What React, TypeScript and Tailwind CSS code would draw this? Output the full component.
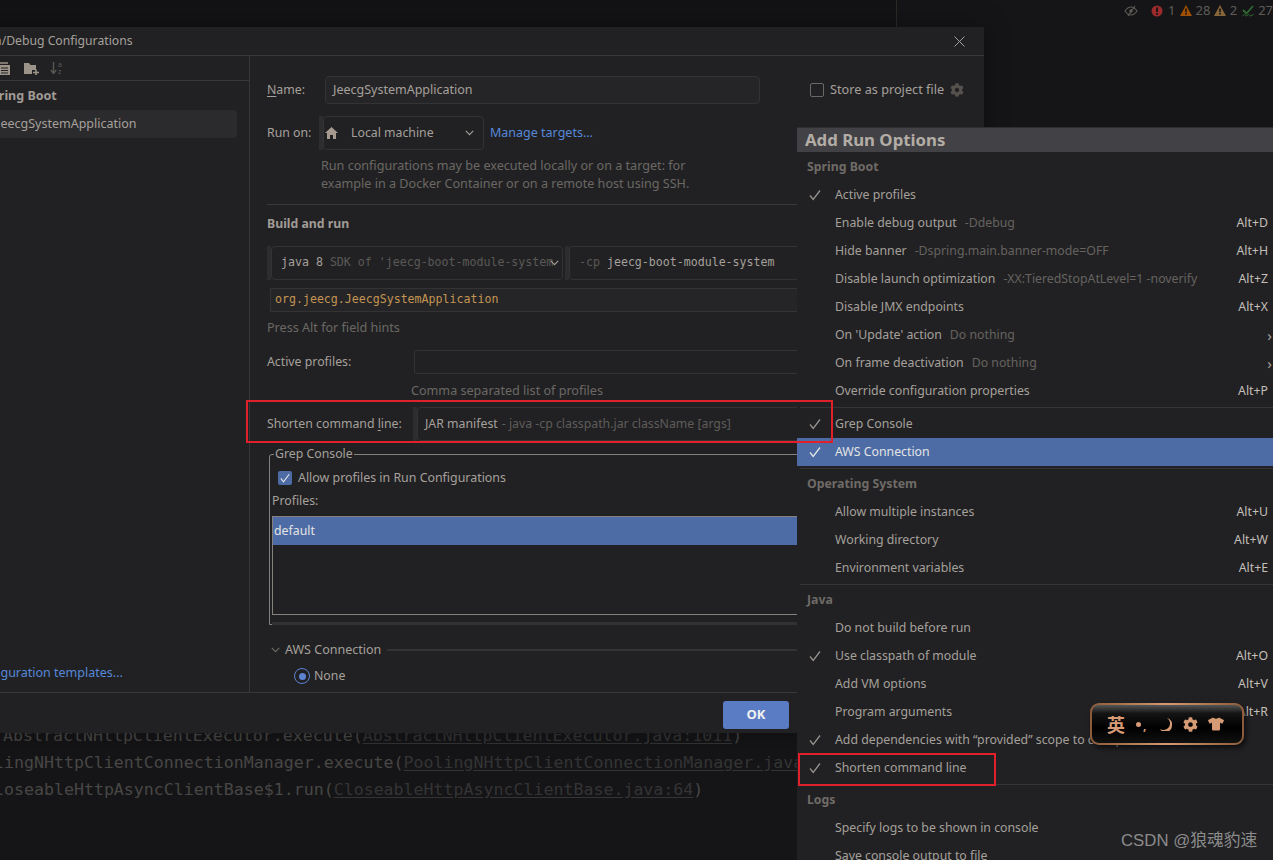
import { FaCog, FaTshirt } from 'react-icons/fa'

const sans = "font-['Noto_Sans','Noto_Sans_CJK_SC',sans-serif]"

type Opt = { label: string; hint?: string; on?: boolean; sel?: boolean; arrow?: boolean; shortcut?: string }

function Check({ className }: { className: string }) {
  return (
    <svg width="12" height="12" viewBox="0 0 12 12" fill="none" className={className}>
      <path d="M1 6.5 4.2 10.5 11 1.5" stroke="currentColor" strokeWidth="1.3" />
    </svg>
  )
}

function OptionRow({ label, hint, on, sel, arrow, shortcut }: Opt) {
  return (
    <div className={`flex h-[28px] shrink-0 items-center pr-[5px] ${sel ? 'bg-[#4d6ca6] text-[#e4e4e4]' : 'text-[#a5a09a]'}`}>
      <div className="flex w-[38px] shrink-0 justify-end pr-[14px]">
        {on && <Check className={sel ? 'text-[#e4e4e4]' : 'text-[#96928c]'} />}
      </div>
      <span className="whitespace-nowrap">{label}</span>
      {hint && <span className="ml-[8px] whitespace-nowrap text-[#66635f]">{hint}</span>}
      <span className="ml-auto whitespace-nowrap text-[#c4bfb8]">{shortcut}</span>
      {arrow && <span className="mr-[-4px] text-[15px] leading-none text-[#a5a09a]">›</span>}
    </div>
  )
}

function GroupHead({ children }: { children: string }) {
  return <div className="flex h-[28px] shrink-0 items-center pl-[10px] font-bold text-[#6f6b66]">{children}</div>
}

function PopSep({ h }: { h: string }) {
  return (
    <div className={`flex shrink-0 items-center pl-[3px] ${h}`}>
      <div className="h-px w-full bg-[#353538]" />
    </div>
  )
}

function StatusIcons() {
  return (
    <div className="flex items-center pl-[227px] pt-[1px] text-[13px] text-[#5f5c58]">
      <svg width="14" height="12" viewBox="0 0 14 12" fill="none" className="shrink-0">
        <path d="M1 6c2-3 4-4 6-4s4 1 6 4c-2 3-4 4-6 4S3 9 1 6Z" stroke="#5e5b57" strokeWidth="1.2" />
        <path d="M4 11 11 1" stroke="#5e5b57" strokeWidth="1.2" />
        <circle cx="7" cy="6" r="1.7" fill="#5e5b57" />
      </svg>
      <svg width="12" height="12" viewBox="0 0 12 12" className="ml-[13px] shrink-0">
        <circle cx="6" cy="6" r="5.5" fill="#9a2a2c" />
        <rect x="5.1" y="2.5" width="1.8" height="4.5" fill="#141416" />
        <rect x="5.1" y="8" width="1.8" height="1.8" fill="#141416" />
      </svg>
      <span className="ml-[5px] w-[14px]">1</span>
      <svg width="12" height="11" viewBox="0 0 12 11" className="shrink-0">
        <path d="M6 0 12 11H0Z" fill="#a04f00" />
        <rect x="5.2" y="3.5" width="1.6" height="3.8" fill="#141416" />
        <rect x="5.2" y="8" width="1.6" height="1.6" fill="#141416" />
      </svg>
      <span className="ml-[4px] w-[22px]">28</span>
      <svg width="12" height="11" viewBox="0 0 12 11" className="shrink-0">
        <path d="M6 0 12 11H0Z" fill="#87653a" />
        <rect x="5.2" y="3.5" width="1.6" height="3.8" fill="#141416" />
        <rect x="5.2" y="8" width="1.6" height="1.6" fill="#141416" />
      </svg>
      <span className="ml-[4px] w-[15px]">2</span>
      <svg width="12" height="12" viewBox="0 0 12 12" fill="none" className="shrink-0">
        <path d="M1 5 4.5 8.5 11 1" stroke="#2f6a31" strokeWidth="1.8" />
        <path d="M0.5 11 2.5 9.5 4.5 11 6.5 9.5 8.5 11 11.5 9.5" stroke="#2f6a31" strokeWidth="1" />
      </svg>
      <span className="ml-[4px]">27</span>
    </div>
  )
}

function Combo({ className, children }: { className: string; children: React.ReactNode }) {
  return (
    <div className={`flex shrink-0 border-l-[4px] border-[#2d2d30] ${className}`}>
      <div className="flex h-full w-full items-center rounded-[4px] border border-[#333336]">{children}</div>
    </div>
  )
}

function Chevron({ className }: { className: string }) {
  return (
    <svg width="9" height="6" viewBox="0 0 9 6" fill="none" className={className}>
      <path d="M.8.8 4.5 4.6 8.2.8" stroke="currentColor" strokeWidth="1.1" />
    </svg>
  )
}

function RightForm() {
  return (
    <div className="flex min-w-0 flex-1 flex-col pl-[17px] text-[12.3px] text-[#a5a09a]">
      {/* Name */}
      <div className="mt-[20px] flex h-[28px] items-center">
        <span className="w-[58px]"><span className="underline underline-offset-2">N</span>ame:</span>
        <div className="flex h-[28px] w-[435px] items-center rounded-[4px] border border-[#333336] bg-[#252528] pl-[7px] text-[12.5px]">JeecgSystemApplication</div>
        <div className="ml-[50px] h-[14px] w-[14px] rounded-[2px] border border-[#6a6865]" />
        <span className="ml-[6px] whitespace-nowrap text-[12.7px]">Store as project file</span>
        <FaCog className="ml-[6px] shrink-0 text-[14px] text-[#55524e]" />
      </div>

      {/* Run on */}
      <div className="mt-[12px] flex h-[34px] items-center">
        <span className="w-[52px]">Run on:</span>
        <Combo className="h-[34px] w-[165px]">
          <svg width="13" height="12" viewBox="0 0 13 12" className="ml-[1px] shrink-0 text-[#a69a8e]">
            <path d="M6.5 0 13 6h-2v6H8V8H5v4H2V6H0Z" fill="currentColor" />
          </svg>
          <span className="ml-[13px]">Local machine</span>
          <Chevron className="ml-auto mr-[9px] text-[#a5a09a]" />
        </Combo>
        <span className="ml-[6px] text-[12.5px] text-[#5688d8]">Manage targets...</span>
      </div>
      <div className="mt-[7px] pl-[54px] text-[12.6px] leading-[18px] text-[#6b6863]">
        <p>Run configurations may be executed locally or on a target: for</p>
        <p>example in a Docker Container or on a remote host using SSH.</p>
      </div>
      <div className="mt-[11px] h-px bg-[#3a3a3d]" />

      {/* Build and run */}
      <div className="mt-[10px] font-bold leading-[18px] text-[#a09b95]">Build and run</div>
      <div className="mt-[13px] flex h-[34px] gap-[2px] font-['DejaVu_Sans_Mono',monospace] text-[11.6px]">
        <Combo className="h-[34px] w-[296px]">
          <span className="ml-[9px] whitespace-nowrap">java 8</span>
          <span className="ml-[7px] min-w-0 overflow-hidden whitespace-nowrap text-[#5b5955]">SDK of 'jeecg-boot-module-system'</span>
          <Chevron className="ml-[-3px] mr-[3px] shrink-0 text-[#a5a09a]" />
        </Combo>
        <Combo className="h-[34px] w-[300px]">
          <span className="ml-[9px] text-[#5b5955]">-cp</span>
          <span className="ml-[7px] whitespace-nowrap">jeecg-boot-module-system</span>
        </Combo>
      </div>
      <div className="ml-[3px] mt-[8px] flex h-[24px] w-[560px] items-center border border-[#333336] bg-[#252528] pl-[4px] font-['DejaVu_Sans_Mono',monospace] text-[11.6px] text-[#c49552]">
        org.jeecg.JeecgSystemApplication
      </div>
      <div className="mt-[7px] text-[12.6px] leading-[18px] text-[#6b6863]">Press Alt for field hints</div>

      {/* Active profiles */}
      <div className="mt-[13px] flex h-[24px] items-center">
        <span className="w-[147px]">Active profiles:</span>
        <div className="h-[24px] w-[420px] rounded-[3px] border border-[#333336]" />
      </div>
      <div className="ml-[144px] mt-[8px] text-[12.6px] leading-[18px] text-[#6b6863]">Comma separated list of profiles</div>

      {/* Shorten command line */}
      <div className="mt-[7px] flex h-[34px] items-center">
        <span className="w-[146px]">Shorten command <span className="underline underline-offset-2">l</span>ine:</span>
        <Combo className="h-[34px] w-[420px]">
          <span className="ml-[7px]">JAR manifest</span>
          <span className="ml-[4px] whitespace-nowrap text-[#5f5c58]">- java -cp classpath.jar className [args]</span>
        </Combo>
      </div>

      {/* Grep Console */}
      <fieldset className="ml-[2px] mt-[5px] h-[179px] w-[560px] rounded-tl-[3px] border border-[#85827e] pl-[2px]">
        <legend className="ml-[2px] px-[1px] leading-[16px]">Grep Console</legend>
        <div className="ml-[6px] mt-[6px] flex h-[20px] items-center">
          <div className="flex h-[14px] w-[14px] items-center justify-center rounded-[2px] bg-[#4d6ca6]">
            <Check className="h-[10px] w-[10px] text-[#e8e8e8]" />
          </div>
          <span className="ml-[6px] text-[12.4px]">Allow profiles in Run Configurations</span>
        </div>
        <div className="mt-[3px] leading-[20px]">Profiles:</div>
        <div className="mt-[5px] h-[99px] border border-[#85827e]">
          <div className="flex h-[28px] items-center bg-[#4d6ca6] pl-[1px] text-[#e4e4e4]">default</div>
        </div>
        <div className="mt-[7px] h-[3px] bg-[#323235]" />
      </fieldset>

      {/* AWS Connection */}
      <div className="mt-[16px] flex h-[18px] items-center">
        <Chevron className="ml-[4px] text-[#6e6b67]" />
        <span className="ml-[5px] text-[12.5px]">AWS Connection</span>
        <div className="ml-[6px] h-[2px] flex-1 bg-[#333336]" />
      </div>
      <div className="ml-[27px] mt-[8px] flex h-[18px] items-center">
        <div className="flex h-[16px] w-[16px] items-center justify-center rounded-full border border-[#5b83d0]">
          <div className="h-[7px] w-[7px] rounded-full bg-[#5b83d0]" />
        </div>
        <span className="ml-[4px]">None</span>
      </div>
    </div>
  )
}

export default function App() {
  return (
    <div className={`relative h-[860px] w-[1273px] overflow-hidden bg-[#151517] text-[13px] ${sans}`}>
      {/* Editor behind the dialog */}
      <div className="flex h-[27px]">
        <div className="w-[896px] shrink-0 bg-[#131315]" />
        <div className="min-w-0 flex-1 overflow-hidden border-l border-[#2c2a27]">
          <StatusIcons />
        </div>
      </div>
      <div className="pt-[695px] font-['DejaVu_Sans_Mono',monospace] text-[16.6px] leading-[27px] text-[#484745]">
        <div className="whitespace-nowrap pl-[3px]">AbstractNHttpClientExecutor.execute(<span className="text-[#343435] underline underline-offset-2">AbstractNHttpClientExecutor.java:1011</span>)</div>
        <div className="ml-[-36px] whitespace-nowrap">PoolingNHttpClientConnectionManager.execute(<span className="text-[#343435] underline underline-offset-2">PoolingNHttpClientConnectionManager.java:246</span>)</div>
        <div className="ml-[-16px] whitespace-nowrap">CloseableHttpAsyncClientBase$1.run(<span className="text-[#343435] underline underline-offset-2">CloseableHttpAsyncClientBase.java:64</span>)</div>
      </div>

      {/* Run/Debug Configurations dialog */}
      <div className="absolute left-[-60px] top-[27px] flex h-[706px] w-[1044px] flex-col bg-[#212124] shadow-[0_0_24px_rgba(0,0,0,0.35)]">
        <div className="flex h-[29px] shrink-0 items-center justify-between border-b border-[#38383b] pl-[39px] pr-[19px] text-[12.2px] text-[#a5a09a]">
          <span>Run/Debug Configurations</span>
          <svg width="11" height="11" viewBox="0 0 11 11" fill="none">
            <path d="M.5.5l10 10M10.5.5l-10 10" stroke="#a5a09a" strokeWidth="1" />
          </svg>
        </div>
        <div className="flex min-h-0 flex-1 border-b border-[#38383b]">
          {/* Sidebar */}
          <div className="flex w-[310px] shrink-0 flex-col border-r border-[#38383b] text-[12.5px]">
            <div className="flex h-[25px] shrink-0 items-center border-b border-[#38383b] pl-[60px]">
              <svg width="10" height="14" viewBox="0 0 10 14" fill="none">
                <path d="M0 2h8" stroke="#9c9488" strokeWidth="1.5" />
                <rect x="0" y="4" width="10" height="10" fill="#9c9488" />
                <path d="M1 7h7M1 9.5h7M1 12h7" stroke="#212124" strokeWidth="1" />
              </svg>
              <svg width="15" height="13" viewBox="0 0 15 13" className="ml-[14px]">
                <path d="M0 1h5l1.5 2H12v5H8v4H0Z" fill="#9c9488" />
                <path d="M9 10.5h6M12 7.5v5.5" stroke="#9c9488" strokeWidth="1.6" />
              </svg>
              <svg width="14" height="14" viewBox="0 0 14 14" fill="none" className="ml-[11px]">
                <path d="M3.5 1v11M.8 9l2.7 3.4L6.2 9" stroke="#5c5955" strokeWidth="1.3" />
                <text x="8" y="6" fontSize="7" fill="#5c5955" fontFamily="Noto Sans">a</text>
                <text x="8" y="13" fontSize="7" fill="#5c5955" fontFamily="Noto Sans">z</text>
              </svg>
            </div>
            <div className="mt-[5px] flex h-[20px] shrink-0 items-center pl-[44px] font-bold text-[#a09b95]">Spring Boot</div>
            <div className="mt-[4px] flex h-[28px] w-[297px] shrink-0 items-center rounded-[4px] bg-[#2b2b2e] pl-[57px] text-[#a5a09a]">JeecgSystemApplication</div>
            <div className="mb-[9px] mt-auto whitespace-nowrap pl-[6px] text-[#5688d8]">Edit configuration templates...</div>
          </div>
          <RightForm />
        </div>
        <div className="flex h-[40px] shrink-0 justify-end pr-[195px] pt-[8px]">
          <div className="flex h-[28px] w-[66px] items-center justify-center rounded-[3px] bg-[#5a7cc4] text-[13px] font-bold text-[#f0f0f0]">OK</div>
        </div>
      </div>

      {/* Add Run Options popup */}
      <div className="absolute left-[797px] top-[127px] flex h-[733px] w-[476px] flex-col overflow-hidden border-t border-[#2e2e31] bg-[#212124] text-[12.3px]">
        <div className="mb-[1px] flex h-[24px] shrink-0 items-center bg-[#414146] pl-[8px] text-[16.8px] font-bold text-[#b3ada5]">Add Run Options</div>
        <GroupHead>Spring Boot</GroupHead>
        <OptionRow label="Active profiles" on />
        <OptionRow label="Enable debug output" hint="-Ddebug" shortcut="Alt+D" />
        <OptionRow label="Hide banner" hint="-Dspring.main.banner-mode=OFF" shortcut="Alt+H" />
        <OptionRow label="Disable launch optimization" hint="-XX:TieredStopAtLevel=1 -noverify" shortcut="Alt+Z" />
        <OptionRow label="Disable JMX endpoints" shortcut="Alt+X" />
        <OptionRow label="On 'Update' action" hint="Do nothing" arrow />
        <OptionRow label="On frame deactivation" hint="Do nothing" arrow />
        <OptionRow label="Override configuration properties" shortcut="Alt+P" />
        <PopSep h="h-[5px]" />
        <OptionRow label="Grep Console" on />
        <OptionRow label="AWS Connection" on sel />
        <PopSep h="h-[4px]" />
        <GroupHead>Operating System</GroupHead>
        <OptionRow label="Allow multiple instances" shortcut="Alt+U" />
        <OptionRow label="Working directory" shortcut="Alt+W" />
        <OptionRow label="Environment variables" shortcut="Alt+E" />
        <PopSep h="h-[4px]" />
        <GroupHead>Java</GroupHead>
        <OptionRow label="Do not build before run" />
        <OptionRow label="Use classpath of module" on shortcut="Alt+O" />
        <OptionRow label="Add VM options" shortcut="Alt+V" />
        <OptionRow label="Program arguments" shortcut="Alt+R" />
        <OptionRow label="Add dependencies with “provided” scope to classpath" on />
        <OptionRow label="Shorten command line" on />
        <PopSep h="h-[4px]" />
        <GroupHead>Logs</GroupHead>
        <OptionRow label="Specify logs to be shown in console" />
        <OptionRow label="Save console output to file" />
      </div>

      {/* Red annotation boxes */}
      <div className="absolute left-[246px] top-[400px] h-[43px] w-[587px] border-2 border-[#e0202a]" />
      <div className="absolute left-[798px] top-[753px] h-[33px] w-[198px] border-2 border-[#e0202a]" />

      {/* IME toolbar */}
      <div className="absolute left-[1090px] top-[703px] h-[42px] w-[154px] rounded-[9px] bg-[linear-gradient(90deg,#8a5a3a,#d59a70_50%,#8a5a3a)] p-[2px] shadow-[2px_3px_5px_rgba(0,0,0,0.6)]">
        <div className="flex h-full items-center rounded-[7px] bg-[linear-gradient(#555_0%,#141414_22%,#000_60%,#111_100%)] pl-[15px] text-[#d69a74]">
          <span className="font-['Noto_Sans_CJK_SC',serif] text-[18px] font-bold leading-none">英</span>
          <span className="ml-[11px] h-[5px] w-[5px] rounded-full bg-[#d69a74]" />
          <span className="ml-[2px] mt-[4px] text-[12px] font-bold leading-none">,</span>
          <svg width="12" height="13" viewBox="0 0 12 13" className="ml-[14px]">
            <path d="M7 0a6.5 6.5 0 0 1-7 11 6.5 6.5 0 0 0 12-3A6.5 6.5 0 0 0 7 0Z" fill="currentColor" />
          </svg>
          <FaCog className="ml-[11px] text-[15px]" />
          <FaTshirt className="ml-[10px] text-[16px]" />
        </div>
      </div>

      {/* Watermark */}
      <div className="absolute left-[1121px] top-[830px] font-['Liberation_Sans','Noto_Sans_CJK_SC',sans-serif] text-[16.8px] leading-[22px] text-[#8b8b8b]">CSDN @狼魂豹速</div>
    </div>
  )
}
